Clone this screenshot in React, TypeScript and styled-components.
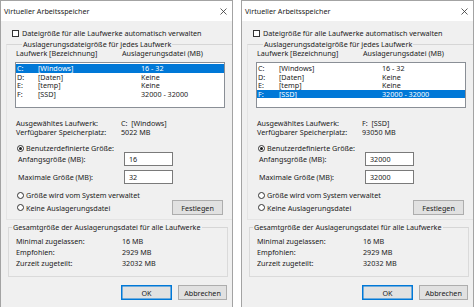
import React from 'react';
import styled, { createGlobalStyle } from 'styled-components';

const GlobalStyle = createGlobalStyle`
  html, body {
    margin: 0;
    padding: 0;
    background: #ffffff;
  }
  body {
    font-family: 'Noto Sans', 'Open Sans', sans-serif;
    font-size: 7.2px;
    line-height: 8px;
    color: #1b1b1b;
  }
`;

const Screen = styled.div`
  display: flex;
  gap: 8px;
  width: 474px;
  height: 307px;
  overflow: hidden;
`;

const Dialog = styled.div`
  width: 233px;
  height: 307px;
  flex: none;
  display: flex;
  flex-direction: column;
  box-sizing: border-box;
  border: 1px solid #a3a3a3;
  border-bottom: none;
  overflow: hidden;
  background: #f0f0f0;
`;

const TitleBar = styled.div`
  height: 20px;
  flex: none;
  display: flex;
  align-items: center;
  justify-content: space-between;
  padding: 0 5px 0 3px;
  background: #ffffff;
`;

const CloseIcon = () => (
  <svg width="7" height="7" viewBox="0 0 7 7">
    <path d="M0.5 0.5 L6.5 6.5 M6.5 0.5 L0.5 6.5" stroke="#333" strokeWidth="0.8" />
  </svg>
);

const Body = styled.div`
  flex: 1;
  display: flex;
  flex-direction: column;
  padding-top: 8px;
`;

const CheckRow = styled.label`
  display: flex;
  align-items: center;
  gap: 3px;
  height: 8px;
  padding-left: 11px;
`;

const CheckBox = styled.span`
  width: 5px;
  height: 5px;
  border: 1px solid #333;
  background: #fff;
`;

const Spacer = styled.div<{ $h: number }>`
  height: ${p => p.$h}px;
  flex: none;
`;

const Group = styled.fieldset<{ $left: number; $right: number; $faint?: boolean }>`
  margin: 0 ${p => p.$right}px 0 ${p => p.$left}px;
  padding: 0;
  border: 1px solid ${p => (p.$faint ? '#e4e4e4' : '#dadada')};
  border-top-color: #d6d6d6;
  min-width: 0;
`;

const Legend = styled.legend<{ $offset: number }>`
  margin-left: ${p => p.$offset}px;
  padding: 0 1px;
  line-height: 8px;
  height: 8px;
`;

const GroupInner = styled.div<{ $pad: string }>`
  padding: ${p => p.$pad};
  display: flex;
  flex-direction: column;
`;

const HeaderRow = styled.div`
  display: grid;
  grid-template-columns: 106px 1fr;
  height: 8px;
  margin-top: 1px;
  padding-left: 1px;
`;

const ListBox = styled.div`
  margin-top: 5px;
  width: 210px;
  height: 46px;
  box-sizing: border-box;
  border: 1px solid #8a8f96;
  background: #fff;
  padding: 1px 0 0 0;
`;

const ListRow = styled.div<{ $selected: boolean }>`
  display: grid;
  grid-template-columns: 21px 103px 1fr;
  height: 8.6px;
  line-height: 8.6px;
  padding-left: 1px;
  background: ${p => (p.$selected ? '#0078d7' : 'transparent')};
  color: ${p => (p.$selected ? '#ffffff' : '#1b1b1b')};
`;

const InfoGrid = styled.div`
  margin-top: 11px;
  display: grid;
  grid-template-columns: 105px 1fr;
  grid-auto-rows: 9px;
  line-height: 9px;
  padding-left: 1px;
  white-space: pre;
`;

const RadioRow = styled.label<{ $top: number; $indent: number }>`
  display: flex;
  align-items: center;
  gap: 2px;
  height: 8px;
  margin-top: ${p => p.$top}px;
  padding-left: ${p => p.$indent}px;
`;

const Radio = styled.span<{ $checked?: boolean }>`
  width: 5px;
  height: 5px;
  border-radius: 50%;
  border: 0.8px solid #333;
  background: #fff;
  display: flex;
  align-items: center;
  justify-content: center;
  &::after {
    content: '';
    width: 3px;
    height: 3px;
    border-radius: 50%;
    background: ${p => (p.$checked ? '#1b1b1b' : 'transparent')};
  }
`;

const FieldRow = styled.div<{ $top: number }>`
  display: grid;
  grid-template-columns: 106px 49px;
  align-items: center;
  height: 14px;
  margin-top: ${p => p.$top}px;
  padding-left: 3px;
`;

const TextInput = styled.div`
  height: 14px;
  box-sizing: border-box;
  border: 1px solid #7a7a7a;
  background: #fff;
  padding-left: 4px;
  display: flex;
  align-items: center;
`;

const LastRow = styled.div`
  display: flex;
  align-items: center;
  justify-content: space-between;
  margin-top: 1px;
  padding-left: 2px;
  width: 206px;
`;

const Button = styled.div<{ $primary?: boolean; $width: number }>`
  width: ${p => p.$width}px;
  height: 15px;
  box-sizing: border-box;
  display: flex;
  align-items: center;
  justify-content: center;
  background: #e1e1e1;
  border: 1px solid ${p => (p.$primary ? '#0078d7' : '#adadad')};
  box-shadow: ${p => (p.$primary ? 'inset 0 0 0 0.5px #0078d7' : 'none')};
`;

const TotalsGrid = styled.div`
  display: grid;
  grid-template-columns: 106px 1fr;
  grid-auto-rows: 11px;
  line-height: 11px;
`;

const ButtonBar = styled.div`
  display: flex;
  gap: 6px;
  margin-top: 8px;
  padding-left: 120px;
`;

interface DialogData {
  selected: number;
  drive: string;
  free: string;
  initial: string;
  max: string;
}

const drives = [
  ['C:', '[Windows]', '16 - 32'],
  ['D:', '[Daten]', 'Keine'],
  ['E:', '[temp]', 'Keine'],
  ['F:', '[SSD]', '32000 - 32000'],
];

const VirtualMemoryDialog: React.FC<{ data: DialogData }> = ({ data }) => (
  <Dialog>
    <TitleBar>
      <span>Virtueller Arbeitsspeicher</span>
      <CloseIcon />
    </TitleBar>
    <Body>
      <CheckRow>
        <CheckBox />
        Dateigröße für alle Laufwerke automatisch verwalten
      </CheckRow>
      <Spacer $h={3} />
      <Group $left={5} $right={-10} $faint>
        <Legend $offset={15}>Auslagerungsdateigröße für jedes Laufwerk</Legend>
        <GroupInner $pad="0 0 4px 8px">
          <HeaderRow>
            <span>Laufwerk [Bezeichnung]</span>
            <span>Auslagerungsdatei (MB)</span>
          </HeaderRow>
          <ListBox>
            {drives.map((d, i) => (
              <ListRow key={d[0]} $selected={i === data.selected}>
                <span>{d[0]}</span>
                <span>{d[1]}</span>
                <span>{d[2]}</span>
              </ListRow>
            ))}
          </ListBox>
          <InfoGrid>
            <span>Ausgewähltes Laufwerk:</span>
            <span>{data.drive}</span>
            <span>Verfügbarer Speicherplatz:</span>
            <span>{data.free}</span>
          </InfoGrid>
          <RadioRow $top={7} $indent={2}>
            <Radio $checked />
            Benutzerdefinierte Größe:
          </RadioRow>
          <FieldRow $top={0}>
            <span>Anfangsgröße (MB):</span>
            <TextInput>{data.initial}</TextInput>
          </FieldRow>
          <FieldRow $top={4}>
            <span>Maximale Größe (MB):</span>
            <TextInput>{data.max}</TextInput>
          </FieldRow>
          <RadioRow $top={7} $indent={2}>
            <Radio />
            Größe wird vom System verwaltet
          </RadioRow>
          <LastRow>
            <RadioRow $top={0} $indent={0}>
              <Radio />
              Keine Auslagerungsdatei
            </RadioRow>
            <Button $width={51}>Festlegen</Button>
          </LastRow>
        </GroupInner>
      </Group>
      <Spacer $h={3} />
      <Group $left={7} $right={4}>
        <Legend $offset={3}>Gesamtgröße der Auslagerungsdatei für alle Laufwerke</Legend>
        <GroupInner $pad="5px 0 7px 7px">
          <TotalsGrid>
            <span>Minimal zugelassen:</span>
            <span>16 MB</span>
            <span>Empfohlen:</span>
            <span>2929 MB</span>
            <span>Zurzeit zugeteilt:</span>
            <span>32032 MB</span>
          </TotalsGrid>
        </GroupInner>
      </Group>
      <ButtonBar>
        <Button $primary $width={51}>OK</Button>
        <Button $width={49}>Abbrechen</Button>
      </ButtonBar>
    </Body>
  </Dialog>
);

const App: React.FC = () => (
  <>
    <GlobalStyle />
    <Screen>
      <VirtualMemoryDialog
        data={{ selected: 0, drive: 'C:  [Windows]', free: '5022 MB', initial: '16', max: '32' }}
      />
      <VirtualMemoryDialog
        data={{ selected: 3, drive: 'F:  [SSD]', free: '93050 MB', initial: '32000', max: '32000' }}
      />
    </Screen>
  </>
);

export default App;
